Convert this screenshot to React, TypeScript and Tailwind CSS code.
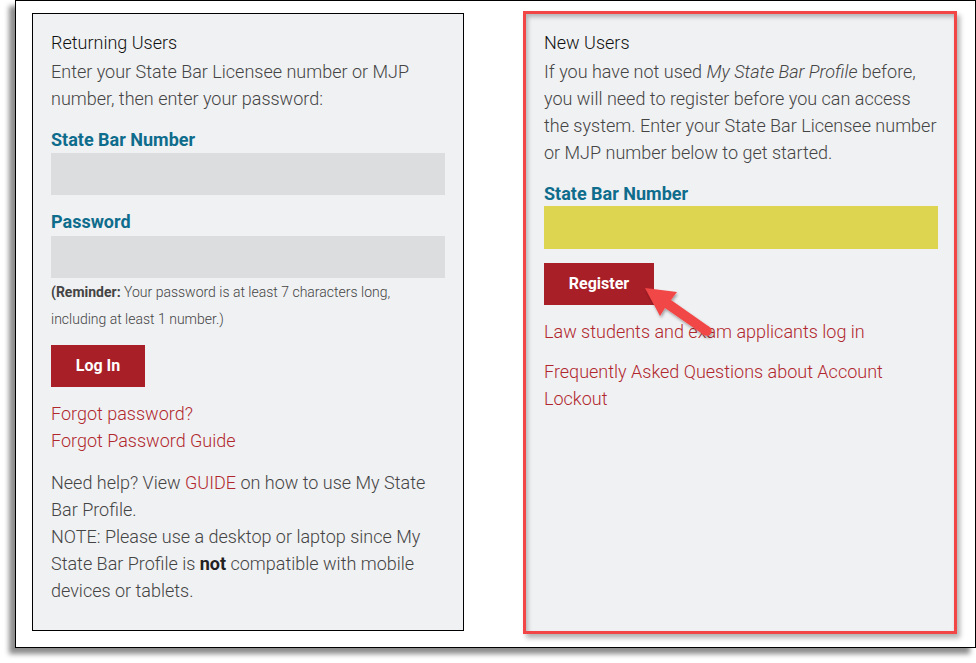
import React from "react"

const linkCls = "text-[#b0282e] hover:underline cursor-pointer"

function Label({ children, className = "" }: { children: React.ReactNode; className?: string }) {
  return <div className={`text-[18px] leading-[27px] font-bold text-[#0e6c8c] ${className}`}>{children}</div>
}

function Field({ className = "bg-[#dcdddf]" }: { className?: string }) {
  return <div className={`h-[42px] w-full ${className}`} />
}

function Button({ children, className = "" }: { children: React.ReactNode; className?: string }) {
  return (
    <button className={`h-[42px] bg-[#a81f28] text-white font-bold text-[16px] ${className}`}>
      {children}
    </button>
  )
}

// red callout arrow pointing at the Register button
function Callout() {
  return (
    <svg className="absolute left-0 top-0 pointer-events-none" width="976" height="663" viewBox="0 0 976 663">
      <defs>
        <filter id="drop" x="-20%" y="-20%" width="140%" height="140%">
          <feDropShadow dx="1" dy="2" stdDeviation="1.5" floodColor="#000" floodOpacity="0.35" />
        </filter>
      </defs>
      <g filter="url(#drop)" fill="#f24646">
        <polygon points="645,288 677,292 671,300 709.5,327 704,335 665,308 660,316" />
        <circle cx="706.8" cy="331" r="4.8" />
      </g>
    </svg>
  )
}

export default function App() {
  return (
    <main className="relative w-[976px] h-[663px] bg-white font-['Roboto','Liberation_Sans',sans-serif] overflow-hidden">
      <div className="ml-[15px] w-[961px] h-[648px] border border-black bg-white shadow-[-6px_6px_5px_rgba(0,0,0,0.45)] flex items-start gap-[59px] pl-[16px] pt-[12px]">
        {/* Returning users */}
        <section className="w-[432px] h-[618px] border border-black bg-[#f0f1f3] px-[18px] pt-[15px]">
          <h2 className="text-[18px] leading-[27px] text-[#111] font-light">Returning Users</h2>
          <p className="mt-[2px] text-[18px] leading-[27px] font-light text-[#444]">
            Enter your State Bar Licensee number or MJP number, then enter your password:
          </p>

          <Label className="mt-[14px]">State Bar Number</Label>
          <Field />

          <Label className="mt-[13px] mb-[1px]">Password</Label>
          <Field />

          <p className="mt-[1px] text-[14px] leading-[27px] font-light text-[#444]">
            <span className="font-bold text-[#444]">(Reminder:</span> Your password is at least 7 characters long, including at least 1 number.)
          </p>

          <Button className="mt-[12px] w-[94px]">Log In</Button>

          <div className="mt-[13px] text-[18px] leading-[27px] font-light">
            <div><span className={linkCls}>Forgot password?</span></div>
            <div><span className={linkCls}>Forgot Password Guide</span></div>
          </div>

          <p className="mt-[15px] text-[18px] leading-[27px] font-light text-[#444]">
            Need help? View <span className={linkCls}>GUIDE</span> on how to use My State Bar Profile.
            <br />
            NOTE: Please use a desktop or laptop since My State Bar Profile is <b className="font-bold text-[#222]">not</b> compatible with mobile devices or tablets.
          </p>
        </section>

        {/* New users, outlined in red */}
        <section className="-mt-[2px] w-[434px] h-[623px] border-[3px] border-[#f24646] bg-[#f0f1f3] shadow-[inset_2px_3px_4px_rgba(0,0,0,0.25),3px_4px_5px_rgba(0,0,0,0.3)] pl-[18px] pr-[16px] pt-[15px]">
          <h2 className="text-[18px] leading-[27px] text-[#111] font-light">New Users</h2>
          <p className="mt-[2px] text-[18px] leading-[27px] font-light text-[#444]">
            If you have not used <i>My State Bar Profile</i> before, you will need to register before you can access the system. Enter your State Bar Licensee number or MJP number below to get started.
          </p>

          <Label className="mt-[14px]">State Bar Number</Label>
          <Field className="bg-[#ddd54f] h-[43px] -mt-[1px]" />

          <Button className="mt-[14px] w-[110px]">Register</Button>

          <div className="mt-[13px] text-[18px] leading-[27px] font-light">
            <span className={linkCls}>Law students and exam applicants log in</span>
          </div>
          <div className="mt-[13px] text-[18px] leading-[27px] font-light">
            <span className={linkCls}>Frequently Asked Questions about Account Lockout</span>
          </div>
        </section>
      </div>
      <Callout />
    </main>
  )
}
